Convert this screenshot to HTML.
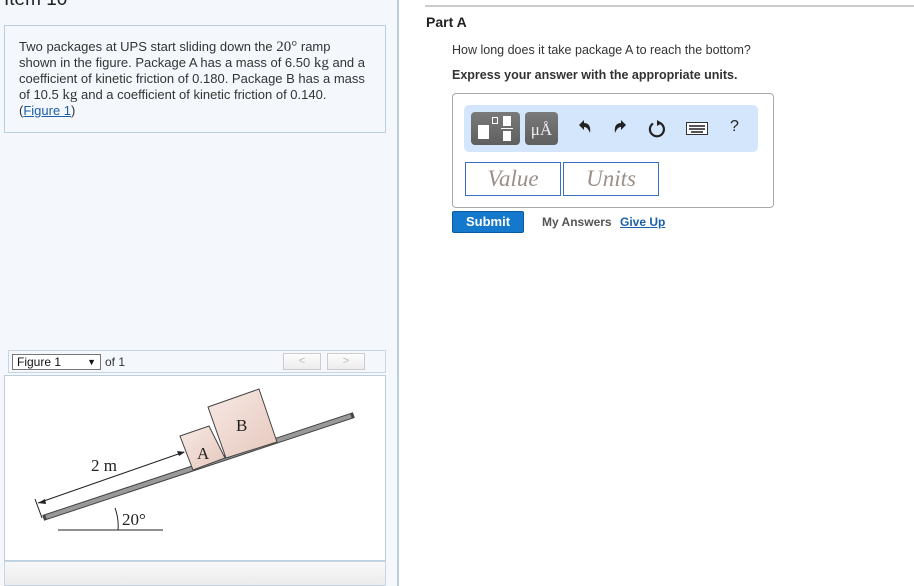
<!DOCTYPE html>
<html><head><meta charset="utf-8"><style>
*{margin:0;padding:0;box-sizing:border-box}
body{width:914px;height:586px;overflow:hidden;background:#fff;font-family:"Liberation Sans",Arial,sans-serif;position:relative;color:#333}
.left{position:absolute;left:0;top:0;width:399px;height:586px;background:#f4f8fd;border-right:2px solid #bccfe0}
.item{position:absolute;left:4px;top:-11px;font-size:19px;color:#222}
.prob{position:absolute;left:4px;top:25px;width:382px;height:108px;border:1px solid #bccfe0;background:#f4f8fd;padding:13px 14px;font-size:13px;line-height:16px;color:#333;white-space:nowrap}
.prob .m{font-family:"Liberation Serif",serif;font-size:15px}
.prob a{color:#1a5fa8}
.fhead{position:absolute;left:8px;top:350px;width:378px;height:23px;border:1px solid #c9d6e2;background:#f4f8fd}
.sel{position:absolute;left:3px;top:3px;width:89px;height:16px;border:1px solid #777;background:#fff;font-size:12px;line-height:14px;padding-left:4px;color:#111}
.sel span{position:absolute;right:4px;top:0;font-size:9px}
.of{position:absolute;left:96px;top:4px;font-size:12px;color:#333}
.nb{position:absolute;top:2px;width:38px;height:17px;border:1px solid #ccc;background:linear-gradient(#fdfdfd,#ececec);color:#bbb;font-size:11px;text-align:center;line-height:15px}
.fbox{position:absolute;left:4px;top:375px;width:382px;height:186px;border:1px solid #bccfe0;background:#fff}
.fbot{position:absolute;left:4px;top:561px;width:382px;height:25px;border:1px solid #c9d6e2;background:linear-gradient(#f8f8f8,#ececec)}
.hr{position:absolute;left:425px;top:5px;width:489px;height:2px;background:#ccc}
.parta{position:absolute;left:426px;top:14px;font-size:14px;font-weight:bold;color:#222}
.q{position:absolute;left:452px;top:43px;font-size:12.5px;color:#333}
.ex{position:absolute;left:452px;top:68px;font-size:12.5px;font-weight:bold;color:#333}
.ans{position:absolute;left:452px;top:93px;width:322px;height:115px;border:1px solid #aaa;border-radius:4px;background:#fff}
.tb{position:absolute;left:11px;top:11px;width:294px;height:47px;background:#d3e6fb;border-radius:5px}
.b1{position:absolute;left:7px;top:7px;width:49px;height:33px;background:linear-gradient(#7a7a7a,#5f5f5f);border-radius:4px}
.b2{position:absolute;left:61px;top:7px;width:33px;height:33px;background:linear-gradient(#7a7a7a,#5f5f5f);border-radius:4px;color:#eee;font-family:"Liberation Serif",serif;font-size:17px;text-align:center;line-height:36px}
.ic{position:absolute;top:14px}
.inp{position:absolute;top:68px;width:96px;height:34px;border:1px solid #3a6fc9;font-family:"Liberation Serif",serif;font-style:italic;font-size:23px;color:#9a9088;text-align:center;line-height:32px}
.sub{position:absolute;left:452px;top:211px;width:72px;height:22px;background:#1479cc;border:1px solid #0c5a9e;color:#fff;font-weight:bold;font-size:13px;text-align:center;line-height:20px;border-radius:2px}
.mya{position:absolute;left:542px;top:215px;font-size:12px;font-weight:bold;color:#555}
.gu{position:absolute;left:620px;top:215px;font-size:12px;font-weight:bold;color:#1a5fa8;text-decoration:underline}
</style></head><body>
<div class="left">
<div class="item">Item 10</div>
<div class="prob">Two packages at UPS start sliding down the <span class="m">20°</span> ramp<br>shown in the figure. Package A has a mass of 6.50 <span class="m">kg</span> and a<br>coefficient of kinetic friction of 0.180. Package B has a mass<br>of 10.5 <span class="m">kg</span> and a coefficient of kinetic friction of 0.140.<br>(<a href="#">Figure 1</a>)</div>
<div class="fhead"><div class="sel">Figure 1<span>▼</span></div><div class="of">of 1</div>
<div class="nb" style="left:274px">&lt;</div><div class="nb" style="left:318px">&gt;</div></div>
<div class="fbox"></div>
<div class="fbot"></div>
<svg style="position:absolute;left:0;top:0" width="400" height="586">
<defs><linearGradient id="g" x1="0" y1="0" x2="1" y2="1"><stop offset="0" stop-color="#f7e9e4"/><stop offset="1" stop-color="#e6c8bd"/></linearGradient></defs>
<line x1="46" y1="517" x2="351" y2="416" stroke="#444" stroke-width="6" stroke-linecap="square"/>
<line x1="46" y1="517" x2="351" y2="416" stroke="#999" stroke-width="4"/>
<polygon points="180,436 209,426 225,458 193,470" fill="url(#g)" stroke="#444" stroke-width="1"/>
<polygon points="208,407 259,389 277,442 226,458" fill="url(#g)" stroke="#444" stroke-width="1"/>
<line x1="38" y1="503" x2="184" y2="452" stroke="#222" stroke-width="1"/>
<polygon points="185,452 177,451 179,456" fill="#222"/>
<polygon points="38,503 45,499 46,504" fill="#222"/>
<line x1="35" y1="499" x2="42" y2="518" stroke="#222" stroke-width="1"/>
<line x1="58" y1="530" x2="163" y2="530" stroke="#222" stroke-width="1"/>
<path d="M115,508 Q119,519 118,530" fill="none" stroke="#222" stroke-width="1"/>
<g font-family="Liberation Serif,serif" fill="#222" font-size="17">
<text x="91" y="471">2 m</text><text x="122" y="525">20°</text>
<text x="197" y="459">A</text><text x="236" y="431">B</text></g>
</svg>
</div>
<div class="hr"></div>
<div class="parta">Part A</div>
<div class="q">How long does it take package A to reach the bottom?</div>
<div class="ex">Express your answer with the appropriate units.</div>
<div class="ans">
<div class="tb">
<div class="b1"><div style="position:absolute;left:7px;top:13px;width:11px;height:14px;background:#fff"></div><div style="position:absolute;left:21px;top:5px;width:6px;height:7px;border:1px solid #fff"></div><div style="position:absolute;left:32px;top:4px;width:8px;height:10px;background:#fff"></div><div style="position:absolute;left:30px;top:16px;width:12px;height:1px;background:#fff"></div><div style="position:absolute;left:32px;top:19px;width:8px;height:10px;background:#fff"></div></div>
<div class="b2">μÅ</div>
<svg class="ic" style="left:112px" width="18" height="18" viewBox="0 0 18 18"><path d="M3,6 L8,1 L8,4 C13,4 15,8 14,14 C12,9 10,8 8,8 L8,11 Z" fill="#222"/></svg>
<svg class="ic" style="left:147px" width="18" height="18" viewBox="0 0 18 18"><path d="M15,6 L10,1 L10,4 C5,4 3,8 4,14 C6,9 8,8 10,8 L10,11 Z" fill="#222"/></svg>
<svg class="ic" style="left:183px" width="20" height="20" viewBox="0 0 20 20"><path d="M13,4 A7,7 0 1 1 6,4.5" fill="none" stroke="#222" stroke-width="2.2"/><path d="M10,1 L15,4 L10,7 Z" fill="#222"/></svg>
<svg class="ic" style="left:222px;top:17px" width="22" height="13" viewBox="0 0 22 13"><rect x="0.5" y="0.5" width="21" height="12" fill="#fff" stroke="#333"/><g fill="#555"><rect x="3" y="3" width="16" height="2"/><rect x="3" y="6" width="16" height="2"/><rect x="5" y="9" width="12" height="2"/></g></svg>
<div style="position:absolute;left:266px;top:13px;font-size:16px;color:#222">?</div>
</div>
<div class="inp" style="left:12px">Value</div>
<div class="inp" style="left:110px">Units</div>
</div>
<div class="sub">Submit</div>
<div class="mya">My Answers</div>
<div class="gu">Give Up</div>
</body></html>
